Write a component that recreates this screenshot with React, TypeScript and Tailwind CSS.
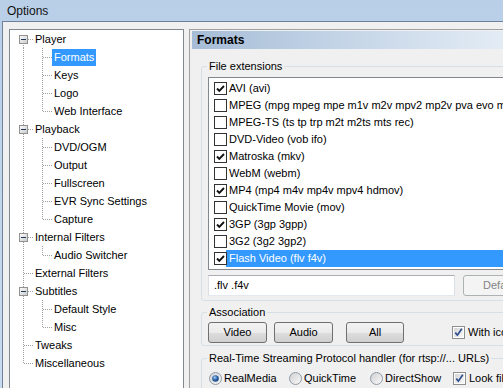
import React from "react";

type Node = { label: string; children?: string[] };

const tree: Node[] = [
  { label: "Player", children: ["Formats", "Keys", "Logo", "Web Interface"] },
  { label: "Playback", children: ["DVD/OGM", "Output", "Fullscreen", "EVR Sync Settings", "Capture"] },
  { label: "Internal Filters", children: ["Audio Switcher"] },
  { label: "External Filters" },
  { label: "Subtitles", children: ["Default Style", "Misc"] },
  { label: "Tweaks" },
  { label: "Miscellaneous" },
];

const formats: [string, boolean][] = [
  ["AVI (avi)", true],
  ["MPEG (mpg mpeg mpe m1v m2v mpv2 mp2v pva evo m2p)", false],
  ["MPEG-TS (ts tp trp m2t m2ts mts rec)", false],
  ["DVD-Video (vob ifo)", false],
  ["Matroska (mkv)", true],
  ["WebM (webm)", false],
  ["MP4 (mp4 m4v mp4v mpv4 hdmov)", true],
  ["QuickTime Movie (mov)", false],
  ["3GP (3gp 3gpp)", true],
  ["3G2 (3g2 3gp2)", false],
  ["Flash Video (flv f4v)", true],
];

const dot = { stroke: "#a0a0a0", strokeWidth: 1, strokeDasharray: "1 1" };

function RootGutter({ first, last, open }: { first: boolean; last: boolean; open: boolean }) {
  return (
    <svg width="23" height="18" className="shrink-0" shapeRendering="crispEdges">
      <line x1="13.5" y1={first ? 9 : 0} x2="13.5" y2={last ? 10 : 18} {...dot} />
      <line x1="14" y1="9.5" x2="23" y2="9.5" {...dot} />
      {open && (
        <>
          <defs>
            <linearGradient id="exp" x1="0" y1="0" x2="1" y2="1">
              <stop offset="0" stopColor="#ffffff" />
              <stop offset="1" stopColor="#c8c8c8" />
            </linearGradient>
          </defs>
          <rect x="9.5" y="5.5" width="8" height="8" fill="url(#exp)" stroke="#919191" />
          <line x1="11" y1="9.5" x2="16" y2="9.5" stroke="#1e395b" />
        </>
      )}
    </svg>
  );
}

function ChildGutter({ last }: { last: boolean }) {
  return (
    <svg width="42" height="18" className="shrink-0" shapeRendering="crispEdges">
      <line x1="13.5" y1="0" x2="13.5" y2="18" {...dot} />
      <line x1="32.5" y1="0" x2="32.5" y2={last ? 10 : 18} {...dot} />
      <line x1="33" y1="9.5" x2="42" y2="9.5" {...dot} />
    </svg>
  );
}

function ListCheck({ on }: { on: boolean }) {
  return (
    <svg width="13" height="13" className="shrink-0" shapeRendering="crispEdges">
      <rect x="0.5" y="0.5" width="12" height="12" fill="#fff" stroke="#333" />
      {on && <path d="M3 6.5 L5.3 8.8 L10 4" fill="none" stroke="#111" strokeWidth="1.9" shapeRendering="auto" />}
    </svg>
  );
}

function ThemedCheck() {
  return (
    <svg width="13" height="13" className="shrink-0">
      <defs>
        <linearGradient id="tc" x1="0" y1="0" x2="1" y2="1">
          <stop offset="0" stopColor="#d4d4d4" />
          <stop offset="1" stopColor="#f9f9f9" />
        </linearGradient>
      </defs>
      <rect x="0.5" y="0.5" width="12" height="12" fill="#fff" stroke="#8e8f8f" />
      <rect x="2" y="2" width="9" height="9" fill="url(#tc)" />
      <path d="M3.3 6.6 L5.4 9.2 L9.8 2.8" fill="none" stroke="#2f4f8f" strokeWidth="1.7" />
    </svg>
  );
}

function Radio({ on }: { on: boolean }) {
  return (
    <svg width="13" height="13" className="shrink-0">
      <defs>
        <linearGradient id="rg" x1="0" y1="0" x2="1" y2="1">
          <stop offset="0" stopColor="#cfcfcf" />
          <stop offset="1" stopColor="#fbfbfb" />
        </linearGradient>
        <radialGradient id="rd" cx="0.4" cy="0.35" r="0.7">
          <stop offset="0" stopColor="#a9d0f5" />
          <stop offset="0.5" stopColor="#2f68b0" />
          <stop offset="1" stopColor="#1a3e73" />
        </radialGradient>
      </defs>
      <circle cx="6.5" cy="6.5" r="6" fill="url(#rg)" stroke="#8e9ba8" />
      {on && <circle cx="6.5" cy="6.5" r="3.3" fill="url(#rd)" />}
    </svg>
  );
}

function Btn({ w, children }: { w: string; children: React.ReactNode }) {
  return (
    <div
      className={`${w} h-[21px] shrink-0 flex items-center justify-center rounded-[3px] border border-[#707070] bg-[linear-gradient(#f2f2f2_0%,#ebebeb_50%,#dddddd_51%,#cfcfcf_100%)] text-black`}
    >
      {children}
    </div>
  );
}

export default function App() {
  return (
    <div className="w-[503px] h-[388px] overflow-hidden bg-[linear-gradient(#b9cfe8,#c9dbee)] font-['Liberation_Sans',Arial,sans-serif] text-[11px] text-black">
      <div className="h-[21px] pl-[7px] flex items-center text-[12px] text-[#111]">Options</div>
      <div className="flex h-[367px] ml-[2px] border-l border-t border-[#6f8299] bg-[#f0f0f0] pl-[6px] pt-[7px]">
        {/* tree */}
        <div className="w-[175px] h-[400px] shrink-0 border border-[#828790] bg-white">
          {tree.map((n, i) => (
            <div key={n.label}>
              <div className="flex h-[18px]">
                <RootGutter first={i === 0} last={i === tree.length - 1} open={!!n.children} />
                <div className="px-[2px] leading-[18px] whitespace-nowrap">{n.label}</div>
              </div>
              {n.children?.map((c, j) => (
                <div key={c} className="flex h-[18px]">
                  <ChildGutter last={j === n.children!.length - 1} />
                  <div
                    className={
                      c === "Formats"
                        ? "self-end h-[17px] leading-[17px] px-[2px] bg-[#3399ff] text-white whitespace-nowrap"
                        : "px-[2px] leading-[18px] whitespace-nowrap"
                    }
                  >
                    {c}
                  </div>
                </div>
              ))}
            </div>
          ))}
        </div>

        {/* page */}
        <div className="ml-[5px] flex-1 overflow-hidden border-l border-t border-[#a0a0a0]">
          <div className="mt-[1px] ml-[2px] h-[18px] flex items-center pl-[5px] font-bold text-[12px] bg-[linear-gradient(to_right,#a6bcd6,#c2d3e6_45%,#e3ecf5)]">
            Formats
          </div>

          <div className="pl-[11px] mt-[10px] flex flex-col">
            <fieldset className="w-[340px] border border-[#d5dfe5] rounded-[3px]">
              <legend className="ml-[5px] px-[2px] leading-[14px]">File extensions</legend>
              <div className="px-[6px] pb-[4px]">
                <div className="mt-[4px] border border-[#828790] bg-white pt-[2px] pb-[2px]">
                  {formats.map(([t, on]) => {
                    const sel = t.startsWith("Flash");
                    return (
                      <div
                        key={t}
                        className={`flex items-center h-[17px] pl-[5px] ${sel ? "bg-[linear-gradient(to_right,transparent_17px,#3399ff_17px)]" : ""}`}
                      >
                        <ListCheck on={on} />
                        <span className={`pl-[2px] whitespace-nowrap ${sel ? "text-white" : ""}`}>{t}</span>
                      </div>
                    );
                  })}
                </div>
                <div className="flex mt-[5px]">
                  <div className="w-[247px] h-[21px] border border-t-[#abadb3] border-x-[#dbdfe6] border-b-[#e3e9ef] bg-white flex items-center pl-[5px]">
                    .flv .f4v
                  </div>
                  <div className="ml-[8px] w-[75px] h-[21px] rounded-[3px] border border-[#adb2b5] bg-[#f4f4f4] flex items-center justify-center text-[#838383]">
                    Default
                  </div>
                </div>
              </div>
            </fieldset>

            <fieldset className="mt-[4px] w-[340px] border border-[#d5dfe5] rounded-[3px]">
              <legend className="ml-[5px] px-[2px] leading-[14px]">Association</legend>
              <div className="flex items-center mt-[3px] px-[6px] pb-[2px]">
                <Btn w="w-[59px]">Video</Btn>
                <div className="ml-[7px]">
                  <Btn w="w-[59px]">Audio</Btn>
                </div>
                <div className="ml-[13px]">
                  <Btn w="w-[58px]">All</Btn>
                </div>
                <div className="ml-[48px] flex items-center">
                  <ThemedCheck />
                  <span className="pl-[3px] whitespace-nowrap">With icons</span>
                </div>
              </div>
            </fieldset>

            <fieldset className="mt-[5px] w-[340px] border border-[#d5dfe5] rounded-[3px]">
              <legend className="ml-[5px] px-[2px] leading-[14px] whitespace-nowrap">
                Real-Time Streaming Protocol handler (for rtsp://... URLs)
              </legend>
              <div className="flex items-center h-[14px] mt-[6px] px-[7px] mb-[6px]">
                <div className="w-[80px] flex items-center">
                  <Radio on />
                  <span className="pl-[2px]">RealMedia</span>
                </div>
                <div className="w-[81px] flex items-center">
                  <Radio on={false} />
                  <span className="pl-[2px]">QuickTime</span>
                </div>
                <div className="w-[83px] flex items-center">
                  <Radio on={false} />
                  <span className="pl-[2px]">DirectShow</span>
                </div>
                <div className="flex items-center">
                  <ThemedCheck />
                  <span className="pl-[3px] whitespace-nowrap">Look file extension</span>
                </div>
              </div>
            </fieldset>
          </div>
        </div>
      </div>
    </div>
  );
}
